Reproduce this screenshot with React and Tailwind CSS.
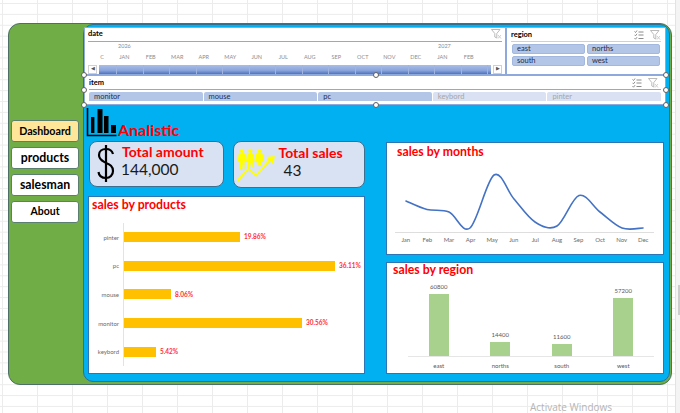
const months = ['Jan', 'Feb', 'Mar', 'Apr', 'May', 'Jun', 'Jul', 'Aug', 'Sep', 'Oct', 'Nov', 'Dec'];
const timeline = ['C', 'JAN', 'FEB', 'MAR', 'APR', 'MAY', 'JUN', 'JUL', 'AUG', 'SEP', 'OCT', 'NOV', 'DEC', 'JAN', 'FEB'];
const navItems = [
  { name: 'Dashboard', size: 'text-[10.7px] bg-[#ffe699]' },
  { name: 'products', size: 'text-[12.3px] bg-white' },
  { name: 'salesman', size: 'text-[12.3px] bg-white' },
  { name: 'About', size: 'text-[10.5px] bg-white' },
];
const items = [
  { name: 'monitor', on: true },
  { name: 'mouse', on: true },
  { name: 'pc', on: true },
  { name: 'keybord', on: false },
  { name: 'pinter', on: false },
];
const products = [
  { name: 'pinter', width: 116, pct: '19.86%' },
  { name: 'pc', width: 211, pct: '36.11%' },
  { name: 'mouse', width: 47, pct: '8.06%' },
  { name: 'monitor', width: 178, pct: '30.56%' },
  { name: 'keybord', width: 32, pct: '5.42%' },
];
const regions = [
  { name: 'east', value: 60800, height: 62 },
  { name: 'norths', value: 14400, height: 14 },
  { name: 'south', value: 11600, height: 12 },
  { name: 'west', value: 57200, height: 58 },
];
const points = [
  [406, 201], [427, 209.5], [449, 212], [470, 228], [494, 175], [514, 199],
  [535, 222], [557, 226], [579, 195.5], [600, 212], [622, 228], [643, 228],
];

// catmull-rom, close to excel's smoothed line
const smoothPath = (pts) => {
  let d = `M${pts[0][0]} ${pts[0][1]}`;
  for (let i = 0; i < pts.length - 1; i++) {
    const p0 = pts[i - 1] || pts[i];
    const p1 = pts[i];
    const p2 = pts[i + 1];
    const p3 = pts[i + 2] || p2;
    const c1x = p1[0] + (p2[0] - p0[0]) / 6;
    const c1y = p1[1] + (p2[1] - p0[1]) / 6;
    const c2x = p2[0] - (p3[0] - p1[0]) / 6;
    const c2y = p2[1] - (p3[1] - p1[1]) / 6;
    d += ` C${c1x} ${c1y} ${c2x} ${c2y} ${p2[0]} ${p2[1]}`;
  }
  return d;
};

const MultiSelectIcon = () => (
  <svg width="10" height="10" viewBox="0 0 10 10" fill="none" stroke="#7f7f7f" strokeWidth="0.9">
    <path d="M0.5 1.5l1 1 1.5-2M0.5 4.8l1 1 1.5-2M0.5 8.2l1 1 1.5-2" />
    <path d="M4.5 2h5M4.5 5h5M4.5 8.5h5" />
  </svg>
);

const ClearFilterIcon = () => (
  <svg width="11" height="10" viewBox="0 0 11 10" fill="none" stroke="#b3b3b3" strokeWidth="0.9">
    <path d="M0.5 0.5h8.5L5.8 4.5V9L3.8 8V4.5z" />
    <path d="M7 6l3 3.5M10 6l-3 3.5" stroke="#c9c9c9" />
  </svg>
);

const ChartLogo = () => (
  <svg width="31" height="30" viewBox="0 0 31 30" className="shrink-0 self-start mt-[3px]">
    <path d="M1.5 0v27.5H30.5" fill="none" stroke="#000" strokeWidth="1.6" />
    <path d="M5 9h3.4v16H5zM11.5 1h5v24h-5zM18 8h4.5v17H18zM25 17h5v8h-5z" fill="#000" />
  </svg>
);

const DollarIcon = () => (
  <svg width="18" height="37" viewBox="0 0 18 37" fill="none" stroke="#000" strokeWidth="2.2" className="shrink-0 mt-[3px] mr-[6px]">
    <path d="M9 0V37" />
    <path d="M16 9C15 5.5 12.5 4 9 4 5 4 2 6 2 10c0 5 4 6 7 8 4 1.5 7 3 7 8 0 4-3 7-7 7-4 0-7-2-7.5-6" />
  </svg>
);

const SalesIcon = () => (
  <svg width="40" height="35" viewBox="15 40 120 105" className="shrink-0" fill="#ffff00">
    <circle cx="33" cy="52" r="6.5" />
    <circle cx="58" cy="52" r="6.5" />
    <circle cx="85" cy="52" r="6.5" />
    <path d="M23 60h20l3 22-5 1-1 24h-5l-2-20-2 20h-5l-1-24-5-1z" />
    <path d="M48 60h20l3 22-5 1-1 20h-5l-2-16-2 16h-5l-1-20-5-1z" />
    <path d="M75 60h20l3 22-5 1-1 12h-5l-2-8-2 8h-5l-1-12-5-1z" />
    <path d="M20 141l32-36 23 20 42-46" fill="none" stroke="#ffff00" strokeWidth="6" />
    <path d="M105 70l26-3-3 26z" />
  </svg>
);

const Handle = ({ className }) => (
  <span className={`absolute w-[6px] h-[6px] rounded-full bg-white border border-[#5f5f5f] ${className}`} />
);

const DateSlicer = () => (
  <div className="w-[422px] h-[48px] bg-white border border-[#8ea9db] flex flex-col px-[3px]">
    <div className="h-[14px] flex items-center justify-between border-b border-[#8ea9db] font-bold text-[7.5px] text-black pb-[2px]">
      <span>date</span>
      <ClearFilterIcon />
    </div>
    <div className="flex text-[5.5px] text-[#8c8c8c] h-[8px] items-center pl-[30px]">
      <span className="w-[320px]">2026</span>
      <span>2027</span>
    </div>
    <div className="flex text-[5.5px] text-[#8c8c8c] h-[14px] items-center pl-[5px]">
      {timeline.map((m, i) => (
        <span key={i} className={i === 0 ? 'w-[18px] text-center' : 'w-[26.5px] text-center'}>
          {m}
        </span>
      ))}
    </div>
    <div className="flex items-center gap-[2px] h-[10px]">
      <span className="w-[9px] h-[9px] border border-[#d0d0d0] text-[5px] flex items-center justify-center text-[#555555]">◀</span>
      <div className="flex-1 h-[9px] bg-[linear-gradient(#a9bde6,#8aa5dc_60%,#4f72bd)] flex">
        {timeline.map((m, i) => (
          <span key={i} className={i === 0 ? 'w-[18px] border-r border-[#9fb4e0]' : 'w-[26.5px] border-r border-[#9fb4e0]'} />
        ))}
      </div>
      <span className="w-[9px] h-[9px] border border-[#d0d0d0] text-[5px] flex items-center justify-center text-[#555555]">▶</span>
    </div>
  </div>
);

const RegionSlicer = () => (
  <div className="flex-1 h-[48px] bg-white border border-[#8ea9db] px-[4px]">
    <div className="h-[14px] flex items-center border-b border-[#c5d1ea] font-bold text-[7.5px] text-black">
      <span className="flex-1">region</span>
      <span className="flex gap-[6px]">
        <MultiSelectIcon />
        <ClearFilterIcon />
      </span>
    </div>
    <div className="grid grid-cols-2 gap-x-[2px] gap-y-[2px] pt-[2px] pl-[1px] pr-[1px] text-[7.5px] text-[#1f2d4d]">
      {['east', 'norths', 'south', 'west'].map((r) => (
        <div key={r} className="h-[10px] bg-[#b4c6e7] border border-[#a3b8de] rounded-[2px] pl-[4px] flex items-center">
          {r}
        </div>
      ))}
    </div>
  </div>
);

const ItemSlicer = () => (
  <div className="relative h-[30px] bg-white border border-[#8ea9db] px-[4px] overflow-visible">
    <div className="h-[14px] flex items-center border-b border-[#8ea9db] font-bold text-[7.5px] text-black">
      <span className="flex-1">item</span>
      <span className="flex gap-[6px] pr-[2px]">
        <MultiSelectIcon />
        <ClearFilterIcon />
      </span>
    </div>
    <div className="flex gap-[1px] pt-[2px] text-[7.5px]">
      {items.map((it) => (
        <div
          key={it.name}
          className={`flex-1 h-[9px] rounded-t-[2px] pl-[5px] flex items-center ${
            it.on ? 'bg-[#b4c6e7] text-[#1f2d4d]' : 'bg-[#d9e1f2] text-[#a6a6a6]'
          }`}
        >
          {it.name}
        </div>
      ))}
    </div>
    <Handle className="-left-[4px] -top-[4px]" />
    <Handle className="-left-[4px] top-[11px]" />
    <Handle className="-left-[4px] -bottom-[4px]" />
    <Handle className="left-[288px] -top-[4px]" />
    <Handle className="left-[288px] -bottom-[4px]" />
    <Handle className="-right-[4px] -top-[4px]" />
    <Handle className="-right-[4px] top-[11px]" />
    <Handle className="-right-[4px] -bottom-[4px]" />
  </div>
);

const ProductsChart = () => (
  <div className="h-[178px] bg-white border border-[#2e75b6] px-[3px]">
    <h2 className="text-[12.3px] leading-[15px] font-bold text-[#ff0000]">sales by products</h2>
    <div className="mt-[11px] ml-[31px] h-[143px] border-l border-[#e3e3e3] flex flex-col justify-around">
      {products.map((p) => (
        <div key={p.name} className="relative flex items-center gap-[4px]">
          <span className="absolute -left-[34px] w-[29px] text-right text-[6px] text-[#6b6b6b]">{p.name}</span>
          <div className="h-[10px] bg-[#ffc000]" style={{ width: p.width }} />
          <span className="text-[6.5px] font-bold text-[#ff3030]">{p.pct}</span>
        </div>
      ))}
    </div>
  </div>
);

const MonthsChart = () => (
  <div className="h-[113px] bg-white border border-[#2e75b6] pl-[8px] pt-px">
    <h2 className="pl-[2px] text-[12.3px] leading-[15px] font-bold text-[#ff0000]">sales by months</h2>
    <svg width="259" height="68" viewBox="395 165 259 68" className="mt-[6px] block" fill="none">
      <path d={smoothPath(points)} stroke="#4472c4" strokeWidth="1.6" strokeLinecap="round" />
      <path d="M395 232.5H654" stroke="#dedede" strokeWidth="1" />
    </svg>
    <div className="grid grid-cols-12 w-[259px] pt-[2px] text-[6px] text-[#6b6b6b] text-center">
      {months.map((m) => (
        <span key={m}>{m}</span>
      ))}
    </div>
  </div>
);

const RegionChart = () => (
  <div className="h-[112px] bg-white border border-[#2e75b6] pl-[6px]">
    <h2 className="text-[12.3px] leading-[13px] font-bold text-[#ff0000]">sales by region</h2>
    <div className="ml-[15px] w-[246px] h-[77px] mt-[4px] grid grid-cols-4 items-end border-b border-[#e6e6e6]">
      {regions.map((r) => (
        <div key={r.name} className="flex flex-col items-center">
          <span className="text-[6px] text-[#595959] pb-[3px]">{r.value}</span>
          <div className="w-[20px] bg-[#a9d18e]" style={{ height: r.height }} />
        </div>
      ))}
    </div>
    <div className="ml-[15px] w-[246px] grid grid-cols-4 pt-[4px] text-[6px] text-[#595959] text-center">
      {regions.map((r) => (
        <span key={r.name}>{r.name}</span>
      ))}
    </div>
  </div>
);

const App = () => {
  return (
    <div className="relative w-[680px] h-[413px] overflow-hidden bg-white font-['Lato',sans-serif] bg-[linear-gradient(#ececec_1px,transparent_1px),linear-gradient(90deg,#ececec_1px,transparent_1px)] bg-[size:35px_10.9px] bg-[position:2px_3px] pt-[23px] pl-[8px]">
      {/* scrollbar strip */}
      <div className="absolute right-0 top-0 bottom-0 w-[5px] bg-[#f4f4f4] border-l border-[#e3e3e3]">
        <div className="mt-[285px] ml-[2px] w-[3px] h-[30px] bg-[#cdcdcd]" />
      </div>

      <div className="relative flex w-[664px] h-[362px] bg-[#70ad47] rounded-[12px] border border-[#4d6f66] pr-px pb-[2px]">
        <nav className="w-[74px] pt-[96px] pl-[2px] flex flex-col gap-[5px] font-bold text-black">
          {navItems.map((n) => (
            <button
              key={n.name}
              className={`w-[68px] h-[22px] rounded-[3px] border border-[#5b7f6e] flex items-center justify-center ${n.size}`}
            >
              {n.name}
            </button>
          ))}
        </nav>

        <main className="flex-1 bg-[#00b0f0] rounded-[10px] border border-[#2f6f90] pt-[2px] pr-[3px]">
          <div className="flex">
            <DateSlicer />
            <RegionSlicer />
          </div>
          <ItemSlicer />

          <div className="grid grid-cols-[277px_278px] gap-x-[21px] pl-[4px]">
            <div>
              <div className="flex items-end h-[35px] -ml-[2px]">
                <ChartLogo />
                <span className="pl-[1px] text-[16px] leading-[20px] font-bold text-[#ff0000]">Analistic</span>
              </div>
              <div className="flex gap-[9px] pl-[1px] pt-[1px]">
                <div className="w-[135px] h-[46px] bg-[#d9e2f3] rounded-[8px] border border-[#3f6f8f] flex pl-[7px]">
                  <DollarIcon />
                  <div className="pt-[1px]">
                    <div className="pl-[1px] text-[14px] leading-[17px] font-bold text-[#ff0000]">Total amount</div>
                    <div className="text-[15.5px] leading-[19px] text-[#1a1a1a]">144,000</div>
                  </div>
                </div>
                <div className="w-[133px] h-[47px] bg-[#d9e2f3] rounded-[8px] border border-[#3f6f8f] flex items-center pl-[2px]">
                  <SalesIcon />
                  <div className="pl-[3px] pb-[7px]">
                    <div className="text-[14px] leading-[17px] font-bold text-[#ff0000]">Total sales</div>
                    <div className="pl-[5px] text-[15.5px] leading-[18px] text-[#1a1a1a]">43</div>
                  </div>
                </div>
              </div>
              <div className="pt-[8px]">
                <ProductsChart />
              </div>
            </div>

            <div className="pt-[37px] flex flex-col gap-[7px]">
              <MonthsChart />
              <RegionChart />
            </div>
          </div>
        </main>
      </div>

      {/* windows watermark */}
      <div className="absolute left-[530px] top-[402px] text-[10px] leading-[11px] text-[#b5b5b5] font-['Open_Sans',sans-serif]">
        Activate Windows
      </div>
    </div>
  );
};

export default App;
